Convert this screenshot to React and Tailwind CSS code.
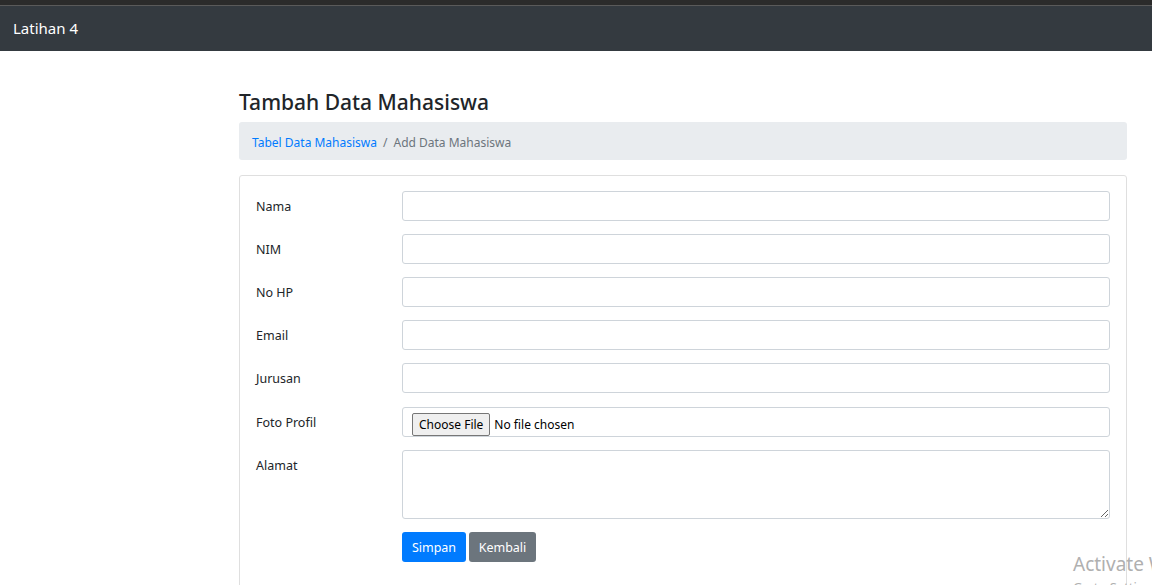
import React from "react";

const fields = ["Nama", "NIM", "No HP", "Email", "Jurusan"];

export default function App() {
  return (
    <div className="relative min-h-[585px] bg-white overflow-hidden" style={{ fontFamily: '"Noto Sans", "Open Sans", sans-serif' }}>
      <div className="h-[5px] bg-[#2b2b2b]" />
      <div className="h-px bg-[#5a5a5a]" />
      <nav className="h-[45px] bg-[#343a40] flex items-center px-[13px]">
        <span className="text-white text-[15px]">Latihan 4</span>
      </nav>
      <div className="ml-[239px] w-[888px] pt-[38px]">
        <h3 className="text-[21px] font-medium text-[#212529] leading-[26px] mb-[7px]">Tambah Data Mahasiswa</h3>
        <div className="h-[38px] bg-[#e9ecef] rounded-[3px] flex items-center px-[13px] pt-[3px] text-[12px]">
          <span className="text-[#007bff]">Tabel Data Mahasiswa</span>
          <span className="text-[#6c757d] px-[6px]">/</span>
          <span className="text-[#6c757d]">Add Data Mahasiswa</span>
        </div>
        <div className="mt-[15px] border border-[#dfdfdf] rounded-[3px] px-[16px] pt-[15px] h-[420px]">
          {fields.map((f, i) => (
            <div key={f} className={i === 4 ? "flex items-center mb-[14px]" : "flex items-center mb-[13px]"}>
              <label className="w-[146px] text-[12.5px] text-[#212529] pt-[2px]">{f}</label>
              <div className="flex-1 h-[30px] border border-[#ced4da] rounded-[3px] bg-white" />
            </div>
          ))}
          <div className="flex items-start mb-[13px]">
            <label className="w-[146px] text-[12.5px] text-[#212529] pt-[7px]">Foto Profil</label>
            <div className="flex-1 h-[30px] border border-[#ced4da] rounded-[3px] bg-white flex items-center pl-[9px] pt-[5px]">
              <span className="h-[23px] px-[6px] flex items-center bg-[#efefef] border border-[#767676] rounded-[2px] text-[12px] text-black">Choose File</span>
              <span className="ml-[4px] text-[12px] text-black">No file chosen</span>
            </div>
          </div>
          <div className="flex items-start mb-[13px]">
            <label className="w-[146px] text-[12.5px] text-[#212529] pt-[7px]">Alamat</label>
            <textarea className="flex-1 h-[69px] border border-[#ced4da] rounded-[3px] bg-white outline-none" />
          </div>
          <div className="flex items-center">
            <div className="w-[146px]" />
            <button className="h-[30px] w-[64px] pt-[2px] bg-[#007bff] text-white text-[12.5px] rounded-[3px]">Simpan</button>
            <button className="ml-[3px] h-[30px] w-[67px] pt-[2px] bg-[#6c757d] text-white text-[12.5px] rounded-[3px]">Kembali</button>
          </div>
        </div>
      </div>
      <div className="absolute left-[1073px] top-[552px] text-[#b0b0b0] text-[19px] leading-[24px] whitespace-nowrap" style={{ fontFamily: '"Noto Sans", sans-serif' }}>
        Activate Windows
        <div className="text-[13px] leading-[18px] mt-[2px]">Go to Settings to activate Windows.</div>
      </div>
    </div>
  );
}
